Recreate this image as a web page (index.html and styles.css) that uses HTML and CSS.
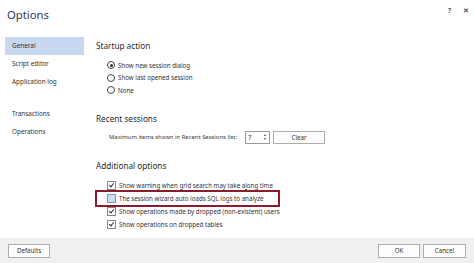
FILE: index.html
```html
<!DOCTYPE html>
<html lang="en">
<head>
    <meta charset="UTF-8">
    <title>Options</title>
    <link rel="stylesheet" href="styles.css">
</head>
<body>
    <div class="dialog">
        <div class="titlebar">
            <h1 class="title">Options</h1>
            <div class="title-buttons">
                <span class="tb-btn">?</span>
                <span class="tb-btn">&#x2715;</span>
            </div>
        </div>

        <div class="main">
            <ul class="nav">
                <li class="nav-item selected">General</li>
                <li class="nav-item">Script editor</li>
                <li class="nav-item">Application log</li>
                <li class="nav-item nav-gap">Transactions</li>
                <li class="nav-item">Operations</li>
            </ul>

            <div class="content">
                <h2 class="section-title">Startup action</h2>
                <div class="option-list">
                    <div class="option"><span class="radio checked"></span>Show new session dialog</div>
                    <div class="option"><span class="radio"></span>Show last opened session</div>
                    <div class="option"><span class="radio"></span>None</div>
                </div>

                <h2 class="section-title spaced">Recent sessions</h2>
                <div class="recent-row">
                    <span class="recent-label">Maximum items shown in Recent Sessions list:</span>
                    <div class="spin">
                        <span>7</span>
                        <span class="spin-arrows"><span class="arrow-up"></span><span class="arrow-down"></span></span>
                    </div>
                    <button class="btn clear-btn">Clear</button>
                </div>

                <h2 class="section-title spaced">Additional options</h2>
                <div class="check-list">
                    <div class="check-row"><span class="check on"></span>Show warning when grid search may take a <u>l</u>ong time</div>
                    <div class="check-row highlight"><span class="check empty"></span>The session wizard auto loads SQL logs to analyze</div>
                    <div class="check-row"><span class="check on"></span>Show operations made by dropped (non-existent) users</div>
                    <div class="check-row"><span class="check on"></span>Show operations on dropped tables</div>
                </div>
            </div>
        </div>

        <div class="footer">
            <button class="btn">Defaults</button>
            <div class="footer-right">
                <button class="btn">OK</button>
                <button class="btn">Cancel</button>
            </div>
        </div>
    </div>
</body>
</html>
```

FILE: styles.css
```css
body {
    margin: 0;
    font-family: "Noto Sans", "Open Sans", sans-serif;
    font-size: 6.2px;
    color: #333;
    background-color: #fff;
}
.dialog {
    width: 474px;
    height: 263px;
    display: flex;
    flex-direction: column;
}
.titlebar {
    height: 30px;
    display: flex;
    justify-content: space-between;
    align-items: flex-start;
    padding: 0 5px 0 7px;
}
.title {
    margin: 7px 0 0 0;
    font-size: 11.3px;
    font-weight: normal;
    line-height: 16px;
    color: #2d3b5b;
}
.title-buttons {
    display: flex;
    gap: 9px;
    margin-top: 6px;
}
.tb-btn {
    font-size: 6.5px;
    font-weight: bold;
    color: #555;
    width: 7px;
    text-align: center;
}
.main {
    flex: 1;
    display: flex;
    padding-top: 7px;
}
.nav {
    list-style: none;
    margin: 0;
    padding: 0 0 0 5px;
    width: 79px;
}
.nav-item {
    height: 18px;
    line-height: 18px;
    padding-left: 7px;
    font-size: 6.4px;
}
.nav-item.selected {
    background-color: #c7d8f0;
}
.nav-gap {
    margin-top: 14px;
}
.content {
    padding-left: 12px;
    padding-top: 2px;
}
.section-title {
    margin: 0;
    font-size: 8.2px;
    font-weight: normal;
    line-height: 14px;
    color: #2a2a2a;
}
.section-title.spaced {
    margin-top: 15px;
}
.option-list {
    margin-top: 6px;
    padding-left: 11px;
}
.option {
    height: 12.5px;
    display: flex;
    align-items: center;
}
.radio {
    width: 6px;
    height: 6px;
    border: 1px solid #444;
    border-radius: 50%;
    margin-right: 3px;
    position: relative;
}
.radio.checked::after {
    content: "";
    position: absolute;
    left: 1.5px;
    top: 1.5px;
    width: 3px;
    height: 3px;
    border-radius: 50%;
    background-color: #333;
}
.recent-row {
    margin-top: 5px;
    padding-left: 13px;
    display: flex;
    align-items: center;
    height: 13px;
    white-space: nowrap;
}
.recent-label {
    font-size: 5.9px;
}
.spin {
    margin-left: 8px;
    width: 25px;
    height: 13px;
    box-sizing: border-box;
    border: 1px solid #9a9a9a;
    display: flex;
    justify-content: space-between;
    align-items: center;
    padding: 0 3px 0 2px;
}
.spin-arrows {
    display: flex;
    flex-direction: column;
    gap: 2px;
}
.arrow-up,
.arrow-down {
    width: 0;
    height: 0;
    border-left: 1.5px solid transparent;
    border-right: 1.5px solid transparent;
}
.arrow-up {
    border-bottom: 2px solid #444;
}
.arrow-down {
    border-top: 2px solid #444;
}
.btn {
    font-family: inherit;
    font-size: 6.2px;
    color: #333;
    background-color: #fdfdfd;
    border: 1px solid #adadad;
    height: 14px;
    width: 42px;
    padding: 0;
    line-height: 12px;
}
.clear-btn {
    margin-left: 3px;
    width: 52px;
    height: 13px;
}
.check-list {
    margin-top: 6.5px;
    padding-left: 11px;
}
.check-row {
    height: 13px;
    display: flex;
    align-items: center;
    white-space: nowrap;
}
.check {
    width: 7px;
    height: 7px;
    border: 1px solid #888;
    margin-right: 3px;
    position: relative;
    flex-shrink: 0;
}
.check.on::after {
    content: "";
    position: absolute;
    left: 2px;
    top: 0px;
    width: 2px;
    height: 4px;
    border: solid #333;
    border-width: 0 1px 1px 0;
    transform: rotate(40deg);
}
.check.empty {
    background-color: #cfdff3;
    border-color: #7d93b5;
}
.highlight {
    margin-left: -10px;
    padding-left: 10px;
    width: 171px;
    outline: 2px solid #8c1b2b;
}
.footer {
    height: 25px;
    background-color: #f0f0f0;
    display: flex;
    justify-content: space-between;
    align-items: center;
    padding: 0 8px;
}
.footer-right {
    display: flex;
    gap: 3px;
}
.footer-right .btn:last-child {
    width: 43px;
}
```
